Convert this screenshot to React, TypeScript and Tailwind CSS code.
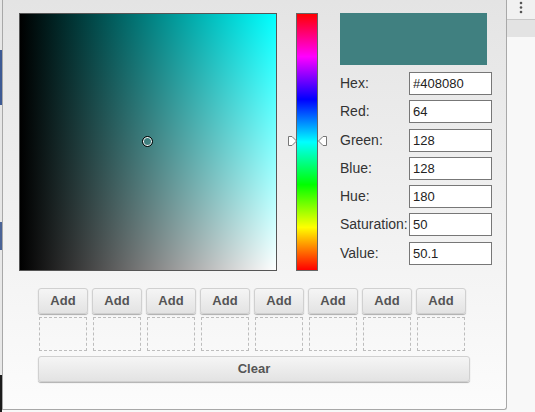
import React from "react";

const fields: { label: string; value: string }[] = [
  { label: "Hex:", value: "#408080" },
  { label: "Red:", value: "64" },
  { label: "Green:", value: "128" },
  { label: "Blue:", value: "128" },
  { label: "Hue:", value: "180" },
  { label: "Saturation:", value: "50" },
  { label: "Value:", value: "50.1" },
];

const slots = [0, 1, 2, 3, 4, 5, 6, 7];

const btn =
  "flex items-center justify-center rounded-[3px] border border-[#d0d0d0] bg-gradient-to-b from-[#f5f5f5] to-[#e3e3e3] text-[13px] font-bold text-[#555] shadow-[0_1px_1px_rgba(0,0,0,0.3)]";

function Arrow({ flip }: { flip?: boolean }) {
  return (
    <svg width="9" height="10" viewBox="0 0 9 10" className={flip ? "-scale-x-100" : ""}>
      <path d="M0.5 0.5 H4 L8.5 5 L4 9.5 H0.5 Z" fill="#fff" stroke="#777" strokeWidth="1" />
    </svg>
  );
}

function LeftStrip() {
  return (
    <div className="flex w-[2px] flex-col">
      <div className="h-[50px] bg-[#e6e6e6]" />
      <div className="h-[55px] bg-[#3d5a94]" />
      <div className="h-[117px] bg-[#e6e6e6]" />
      <div className="h-[28px] bg-[#4a6396]" />
      <div className="h-[125px] bg-[#e8e8e8]" />
      <div className="flex-1 bg-[#1c1c1c]" />
    </div>
  );
}

function PageEdge() {
  return (
    <div className="flex flex-1 flex-col">
      <div className="flex h-[19px] items-start justify-center bg-[#f1f1f1] pt-[1px]">
        <svg width="4" height="13" viewBox="0 0 4 13">
          <circle cx="2" cy="2" r="1.3" fill="#555" />
          <circle cx="2" cy="6.5" r="1.3" fill="#555" />
          <circle cx="2" cy="11" r="1.3" fill="#555" />
        </svg>
      </div>
      <div className="h-[1px] bg-[#c8c8c8]" />
      <div className="h-[17px] bg-[#e3e3e3]" />
      <div className="flex-1 bg-[#f8f8f8]" />
    </div>
  );
}

export default function App() {
  return (
    <div className="flex h-[412px] w-[535px] overflow-hidden bg-[#f8f8f8] font-['Liberation_Sans',Arial,sans-serif]">
      <LeftStrip />

      <div className="flex h-[410px] w-[505px] flex-col rounded-br-[3px] border-x border-b border-[#a8a8a8] bg-gradient-to-b from-[#e4e4e4] to-[#fcfcfc] pt-[13px]">
        <div className="flex pl-[16px]">
          {/* saturation / value square */}
          <div className="relative h-[258px] w-[258px] border border-[#555] bg-[linear-gradient(to_right,#000,transparent),linear-gradient(to_bottom,#0ff,#fff)]">
            <div className="absolute left-[122px] top-[122px] h-[11px] w-[11px] rounded-full border border-black shadow-[inset_0_0_0_1px_#fff]" />
          </div>

          {/* hue bar */}
          <div className="relative ml-[19px] h-[258px] w-[22px] border border-[#666] bg-[linear-gradient(to_bottom,#f00,#f0f,#00f,#0ff,#0f0,#ff0,#f00)]">
            <div className="absolute left-[-9px] top-[122px]">
              <Arrow />
            </div>
            <div className="absolute right-[-10px] top-[122px]">
              <Arrow flip />
            </div>
          </div>

          <div className="ml-[22px] flex w-[152px] flex-col">
            <div className="h-[52px] w-[147px] bg-[#408080]" />
            <div className="mt-[7px] flex flex-col gap-[5.3px]">
              {fields.map((f) => (
                <div key={f.label} className="flex h-[23px] items-center">
                  <span className="w-[69px] text-[14px] text-[#333]">{f.label}</span>
                  <input
                    readOnly
                    value={f.value}
                    className="h-[23px] w-[83px] border border-[#777] bg-white px-[3px] text-[13px] text-[#222] outline-none"
                  />
                </div>
              ))}
            </div>
          </div>
        </div>

        <div className="mt-[17px] flex flex-col pl-[35px]">
          <div className="flex gap-[4px]">
            {slots.map((i) => (
              <div key={i} className={`${btn} h-[26px] w-[50px]`}>
                Add
              </div>
            ))}
          </div>
          <div className="mt-[3px] flex gap-[4px]">
            {slots.map((i) => (
              <div key={i} className="w-[50px] pl-[1px]">
                <div className="h-[34px] w-[48px] border border-dashed border-[#bdbdbd]" />
              </div>
            ))}
          </div>
          <div className={`${btn} mt-[5px] h-[26px] w-[432px]`}>Clear</div>
        </div>
      </div>

      <PageEdge />
    </div>
  );
}
